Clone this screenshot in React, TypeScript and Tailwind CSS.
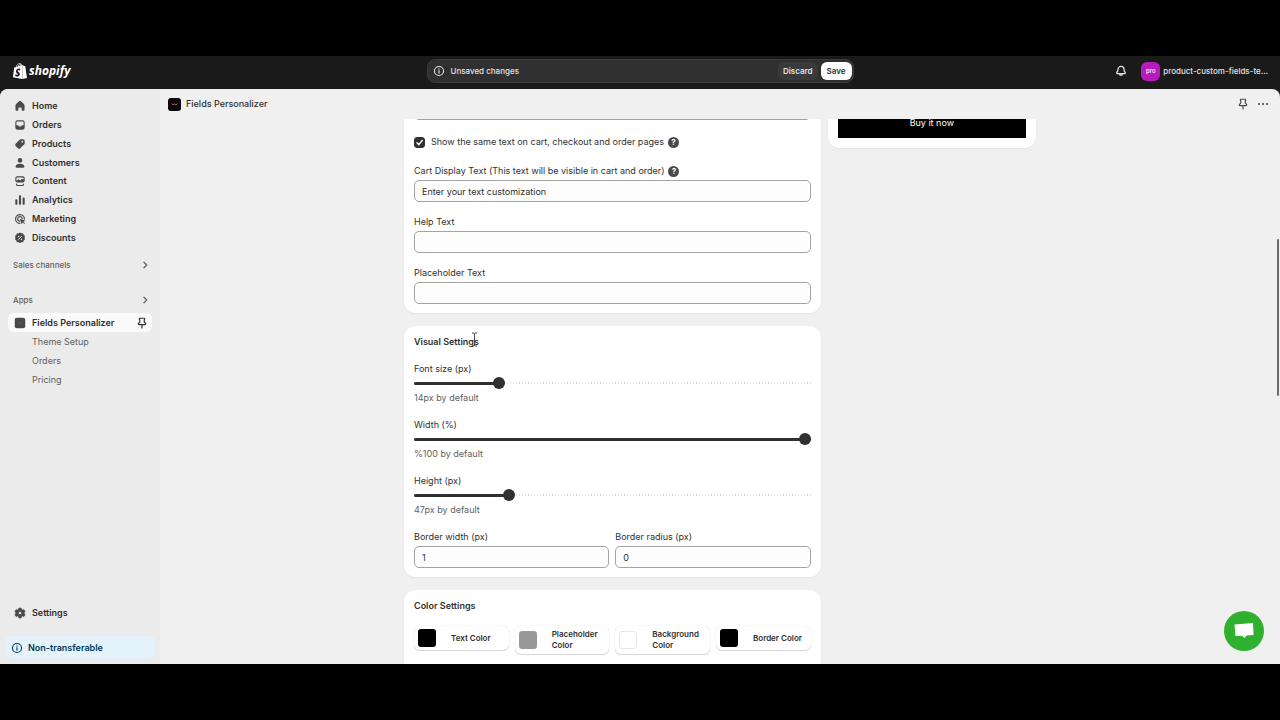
import { useState } from "react";
import type { ReactNode } from "react";
import { SiShopify } from "react-icons/si";

const Icon = ({ children, className = "size-[14px]" }: { children: ReactNode; className?: string }) => (
  <svg viewBox="0 0 20 20" fill="currentColor" className={`shrink-0 ${className}`} aria-hidden="true">
    {children}
  </svg>
);

const PinIcon = ({ className }: { className?: string }) => (
  <Icon className={className}>
    <path
      d="M6.800 3.200h6.400c.5 0 .8.500.6 1l-.6 1.600v2.700l1.900 2.400c.4.600 0 1.400-.7 1.400H5.600c-.7 0-1.100-.8-.7-1.400l1.900-2.400V5.800l-.6-1.600c-.2-.5.100-1 .6-1zM10 12.300v4.700"
      fill="none"
      stroke="currentColor"
      strokeWidth="1.700"
      strokeLinecap="round"
      strokeLinejoin="round"
    />
  </Icon>
);

const InfoIcon = ({ className }: { className?: string }) => (
  <Icon className={className}>
    <circle cx="10" cy="10" r="6.500" fill="none" stroke="currentColor" strokeWidth="1.600" />
    <path d="M10 9.500v3.800" stroke="currentColor" strokeWidth="1.600" strokeLinecap="round" />
    <circle cx="10" cy="7" r="1" />
  </Icon>
);

const ChevronIcon = () => (
  <Icon className="size-[14px]">
    <path d="M8.500 6l4 4-4 4" fill="none" stroke="currentColor" strokeWidth="1.800" strokeLinecap="round" strokeLinejoin="round" />
  </Icon>
);

const navItems = [
  {
    label: "Home",
    icon: <path d="M8.3 3.4a2.5 2.5 0 0 1 3.4 0l3.9 3.9c.6.6.9 1.3.9 2.1v5.6a1.7 1.7 0 0 1-1.7 1.7h-1.6a.9.9 0 0 1-.9-.9V13a1 1 0 0 0-1-1H8.700a1 1 0 0 0-1 1v2.800a.9.9 0 0 1-.9.9H5.200A1.700 1.700 0 0 1 3.500 15V9.400c0-.8.300-1.500.9-2.100z" />,
  },
  {
    label: "Orders",
    icon: (
      <path
        fillRule="evenodd"
        d="M6.500 3.300A3.200 3.200 0 0 0 3.300 6.500v7a3.200 3.200 0 0 0 3.200 3.200h7a3.200 3.200 0 0 0 3.200-3.200v-7a3.200 3.200 0 0 0-3.200-3.200zM4.900 6.500c0-.9.700-1.600 1.600-1.600h7c.9 0 1.600.7 1.600 1.600v4h-1.700c-.7 0-1.300.4-1.600 1l-.2.4c-.1.200-.3.300-.5.300H8.900c-.2 0-.4-.1-.5-.3l-.2-.4c-.3-.6-.9-1-1.600-1H4.900z"
      />
    ),
  },
  {
    label: "Products",
    icon: (
      <path
        fillRule="evenodd"
        d="M11.200 3.300c-.8 0-1.500.3-2 .9L3.800 9.700a2.300 2.300 0 0 0 0 3.300l3.200 3.200a2.300 2.300 0 0 0 3.300 0l5.500-5.400c.6-.5.900-1.200.9-2V5.600a2.300 2.300 0 0 0-2.300-2.300zM13.300 8a1.300 1.300 0 1 0 0-2.600 1.300 1.300 0 0 0 0 2.600z"
      />
    ),
  },
  {
    label: "Customers",
    icon: (
      <>
        <circle cx="10" cy="6.300" r="3.300" />
        <path d="M3.800 14.200c.9-2 3.300-3.200 6.200-3.200s5.300 1.200 6.200 3.200c.6 1.300-.4 2.500-1.700 2.500h-9c-1.300 0-2.300-1.200-1.700-2.500z" />
      </>
    ),
  },
  {
    label: "Content",
    icon: (
      <>
        <path
          fillRule="evenodd"
          d="M5.800 3.300a2.500 2.500 0 0 0-2.500 2.500v3.900a2.500 2.500 0 0 0 2.500 2.500h8.400a2.500 2.500 0 0 0 2.500-2.500V5.800a2.500 2.500 0 0 0-2.500-2.500zM4.900 5.800c0-.5.400-.9.900-.9h8.400c.5 0 .9.400.9.900v2.400l-1.400-1.100a1 1 0 0 0-1.300.1L10.200 9.300 8.400 7.900a1 1 0 0 0-1.200 0L4.900 9.600z"
        />
        <path d="M5 14.200v.8c0 .9.700 1.400 1.500 1.400h7c.8 0 1.500-.5 1.500-1.400v-.8" fill="none" stroke="currentColor" strokeWidth="1.500" strokeLinecap="round" />
      </>
    ),
  },
  {
    label: "Analytics",
    icon: (
      <>
        <rect x="3.300" y="9" width="3" height="7.700" rx="1" />
        <rect x="8.500" y="3.300" width="3" height="13.400" rx="1" />
        <rect x="13.700" y="6.300" width="3" height="10.400" rx="1" />
      </>
    ),
  },
  {
    label: "Marketing",
    icon: (
      <>
        <path
          d="M16.300 10.200A6.300 6.300 0 1 0 9.600 16.300M13.200 9.300A3.300 3.300 0 1 0 9.300 13.100"
          fill="none"
          stroke="currentColor"
          strokeWidth="1.700"
          strokeLinecap="round"
        />
        <path d="M10 10.800c-.2-.6.300-1.100.9-.9l5.400 1.800c.7.200.7 1.200.1 1.400l-1.600.7 2 2c.6.600-.4 1.600-1 1l-2-2-.7 1.600c-.3.600-1.200.6-1.400-.1z" />
      </>
    ),
  },
  {
    label: "Discounts",
    icon: (
      <>
        <path d="M8.600 2.800a2 2 0 0 1 2.800 0l.6.600.8-.1a2 2 0 0 1 2.300 1.700l.1.800.7.400a2 2 0 0 1 .9 2.700l-.4.700.4.800a2 2 0 0 1-.9 2.700l-.7.400-.1.800a2 2 0 0 1-2.300 1.700l-.8-.1-.6.600a2 2 0 0 1-2.800 0l-.6-.6-.8.100a2 2 0 0 1-2.300-1.700l-.1-.8-.7-.4a2 2 0 0 1-.9-2.700l.4-.8-.4-.7a2 2 0 0 1 .9-2.700l.7-.4.100-.8a2 2 0 0 1 2.300-1.700l.8.100z" />
        <path d="M7.800 12l4.400-4.400" stroke="#ebebeb" strokeWidth="1.300" strokeLinecap="round" />
        <circle cx="8" cy="7.800" r="1" fill="#ebebeb" />
        <circle cx="12" cy="11.800" r="1" fill="#ebebeb" />
      </>
    ),
  },
];

const TopBar = () => (
  <header className="grid h-[33px] shrink-0 grid-cols-[1fr_minmax(0,427px)_1fr] items-center bg-[#1a1a1a] pb-[3px] text-[8px] text-[#e3e3e3]">
    <a href="#home" className="flex items-center gap-px pl-3 text-white">
      <SiShopify className="size-4" aria-hidden="true" />
      <span className="font-['Open_Sans',sans-serif] text-[12px] leading-4 font-bold italic">shopify</span>
    </a>
    <div className="flex h-6 items-center rounded-lg border border-[#3a3a3a] bg-[#303030] pr-px pl-1">
      <InfoIcon className="size-[14px]" />
      <span className="ml-[5px] flex-1 font-medium">Unsaved changes</span>
      <button className="h-[18px] rounded-md bg-[#3a3a3a] px-[5px] font-semibold">Discard</button>
      <button className="ml-[3px] h-[18px] rounded-md bg-white px-[6px] font-semibold text-[#303030]">Save</button>
    </div>
    <div className="flex items-center justify-end pr-3">
      <button aria-label="Notifications" className="mr-[13px]">
        <Icon className="size-[14px]">
          <path
            d="M10 3.500a4.300 4.300 0 0 0-4.300 4.300c0 2.300-.7 3.100-1.500 4-.7.800-.2 2 .9 2h9.800c1.100 0 1.600-1.200.9-2-.8-.9-1.500-1.700-1.500-4A4.300 4.300 0 0 0 10 3.500zM8 14.200a2 2 0 0 0 4 0"
            fill="none"
            stroke="currentColor"
            strokeWidth="1.800"
          />
        </Icon>
      </button>
      <button className="flex items-center gap-[3px] font-medium">
        <span className="flex size-[19px] items-center justify-center rounded-md bg-[#b71bbd] text-[6px] text-white">pro</span>
        product-custom-fields-te...
      </button>
    </div>
  </header>
);

const Sidebar = () => (
  <aside className="flex w-40 shrink-0 flex-col bg-[#ebebeb] pt-2 text-[#303030]">
    <nav className="px-2 font-semibold">
      <ul className="flex h-[150px] flex-col">
        {navItems.map((item) => (
          <li key={item.label} className="flex flex-1">
            <a href="#nav" className="flex flex-1 items-center gap-[5px] px-[5px]">
              <Icon className="size-[14px] text-[#4a4a4a]">{item.icon}</Icon>
              {item.label}
            </a>
          </li>
        ))}
      </ul>
      <button className="mt-2 flex h-[19px] w-full items-center justify-between pl-[5px] text-[8px] font-medium text-[#616161]">
        Sales channels
        <ChevronIcon />
      </button>
      <button className="mt-4 flex h-[19px] w-full items-center justify-between pl-[5px] text-[8px] font-medium text-[#616161]">
        Apps
        <ChevronIcon />
      </button>
      <a href="#app" className="mt-1 flex h-[19px] items-center gap-[5px] rounded-md bg-[#fafafa] pr-[3px] pl-[5px]">
        <Icon className="size-[14px] text-[#4a4a4a]">
          <rect x="2.500" y="2.500" width="15" height="15" rx="3" />
          <path d="M6.500 9l2 1.500L10 9.300l1.500 1.200 2-1.500" fill="none" stroke="#6a5a5a" />
        </Icon>
        <span className="flex-1">Fields Personalizer</span>
        <PinIcon className="size-[14px]" />
      </a>
      <ul className="font-normal text-[#616161]">
        {["Theme Setup", "Orders", "Pricing"].map((label) => (
          <li key={label}>
            <a href="#sub" className="flex h-[19px] items-center pl-6">{label}</a>
          </li>
        ))}
      </ul>
    </nav>
    <div className="mt-auto px-[5px] pb-[5px]">
      <a href="#settings" className="flex h-[19px] items-center gap-[5px] px-2 font-semibold">
        <Icon className="size-[14px] text-[#4a4a4a]">
          <path
            fillRule="evenodd"
            strokeLinejoin="round"
            stroke="currentColor"
            d="M8.300 3h3.400l.5 2 1.400.8 2-.6 1.700 2.900-1.500 1.400v1.100l1.500 1.400-1.700 2.900-2-.6-1.400.8-.5 2H8.300l-.5-2-1.400-.8-2 .6L2.700 12l1.500-1.400V9.500L2.700 8.100l1.700-2.900 2 .6L7.800 5zM10 12.300a2.300 2.300 0 1 0 0-4.600 2.300 2.300 0 0 0 0 4.600z"
          />
        </Icon>
        Settings
      </a>
      <button className="mt-[14px] flex h-[23px] w-full items-center gap-1 rounded-md bg-[#e4f2fc] pl-[5px] font-semibold text-[#003a5a]">
        <InfoIcon className="size-[14px]" />
        Non-transferable
      </button>
    </div>
  </aside>
);

const HelpBadge = () => (
  <button
    aria-label="Help"
    className="flex size-[11px] shrink-0 items-center justify-center rounded-full bg-[#4a4a4a] text-[8px] font-bold text-white"
  >
    ?
  </button>
);

interface TextFieldProps {
  id: string;
  label: string;
  value?: string;
  help?: boolean;
}

const TextField = ({ id, label, value = "", help }: TextFieldProps) => (
  <div>
    <div className="mb-[2px] flex h-[14px] items-center gap-1">
      <label htmlFor={id}>{label}</label>
      {help && <HelpBadge />}
    </div>
    <input
      id={id}
      type="text"
      defaultValue={value}
      className="block h-[22px] w-full rounded-[5px] border border-[#a3a3a3] bg-[#fdfdfd] px-[7px] outline-none"
    />
  </div>
);

interface RangeFieldProps {
  id: string;
  label: string;
  max: number;
  initial: number;
  helpText: string;
}

const RangeField = ({ id, label, max, initial, helpText }: RangeFieldProps) => {
  const [value, setValue] = useState(initial);

  return (
    <div>
      <label htmlFor={id} className="block">{label}</label>
      <div className="grid h-[14px] items-center *:col-start-1 *:row-start-1">
        <div className="h-[2px] bg-[repeating-linear-gradient(to_right,#dcdcdc_0_1px,transparent_1px_3px)]" />
        <div className="h-[3px] rounded-full bg-[#303030]" style={{ width: `${(value / max) * 100}%` }} />
        <input
          id={id}
          type="range"
          min={0}
          max={max}
          value={value}
          onChange={(e) => setValue(Number(e.target.value))}
          className="h-3 w-full appearance-none bg-transparent [&::-webkit-slider-thumb]:size-3 [&::-webkit-slider-thumb]:appearance-none [&::-webkit-slider-thumb]:rounded-full [&::-webkit-slider-thumb]:bg-[#303030]"
        />
      </div>
      <p className="leading-4 text-[#616161]">{helpText}</p>
    </div>
  );
};

const colors = [
  { label: "Text Color", swatch: "bg-black" },
  { label: "Placeholder Color", swatch: "bg-[#999999]" },
  { label: "Background Color", swatch: "bg-white border border-[#e6e6e6]" },
  { label: "Border Color", swatch: "bg-black" },
];

const FieldForm = () => (
  <div className="flex flex-col gap-[13px]">
    <section className="flex flex-col rounded-xl bg-white px-[10px] pt-px pb-[9px] shadow-xs">
      <input
        type="text"
        aria-label="Text"
        className="h-[22px] w-full rounded-[5px] border border-[#a3a3a3] bg-[#fdfdfd] px-[7px]"
      />
      <div className="my-[15px] flex h-[14px] items-center gap-1">
        <label className="flex items-center gap-[6px]">
          <span className="grid *:col-start-1 *:row-start-1">
            <input type="checkbox" defaultChecked className="peer size-[11px] appearance-none rounded-[3px] border border-[#303030] checked:bg-[#303030]" />
            <svg viewBox="0 0 11 11" className="pointer-events-none hidden size-[11px] peer-checked:block" aria-hidden="true">
              <path d="M3 5.800l1.800 1.800L8.200 3.500" fill="none" stroke="#fff" strokeWidth="1.400" strokeLinecap="round" />
            </svg>
          </span>
          Show the same text on cart, checkout and order pages
        </label>
        <HelpBadge />
      </div>
      <div className="flex flex-col gap-[13px]">
        <TextField
          id="cart-text"
          label="Cart Display Text (This text will be visible in cart and order)"
          value="Enter your text customization"
          help
        />
        <TextField id="help-text" label="Help Text" />
        <TextField id="placeholder-text" label="Placeholder Text" />
      </div>
    </section>

    <section className="flex flex-col rounded-xl bg-white px-[10px] py-[9px] shadow-xs">
      <h2 className="mb-[13px] font-semibold">Visual Settings</h2>
      <div className="flex flex-col gap-3">
        <RangeField id="font-size" label="Font size (px)" max={68} initial={14} helpText="14px by default" />
        <RangeField id="width" label="Width (%)" max={100} initial={100} helpText="%100 by default" />
        <RangeField id="height" label="Height (px)" max={203} initial={47} helpText="47px by default" />
        <div className="grid grid-cols-2 gap-[6px]">
          <TextField id="border-width" label="Border width (px)" value="1" />
          <TextField id="border-radius" label="Border radius (px)" value="0" />
        </div>
      </div>
    </section>

    <section className="flex flex-col rounded-xl bg-white px-[10px] pt-[9px] pb-5 shadow-xs">
      <h2 className="mb-[13px] font-semibold">Color Settings</h2>
      <div className="grid grid-cols-4 items-start gap-[6px]">
        {colors.map((color) => (
          <button
            key={color.label}
            className="flex items-center gap-[15px] rounded-md px-1 py-[3px] text-left text-[8px] leading-[11px] font-semibold shadow-[0_0_1px_rgba(0,0,0,0.2),0_1px_1px_rgba(0,0,0,0.15)]"
          >
            <span className={`size-[18px] shrink-0 rounded-[3px] ${color.swatch}`} />
            {color.label}
          </button>
        ))}
      </div>
    </section>
  </div>
);

const App = () => (
  <div className="min-h-screen bg-black py-14 font-[Inter,sans-serif] text-[9px] leading-[14px] text-[#303030]">
    <div className="flex h-[calc(100vh-112px)] flex-col overflow-hidden bg-[#1a1a1a]">
      <TopBar />
      <div className="flex min-h-0 flex-1 overflow-hidden rounded-t-lg bg-[#f0f0f0]">
        <Sidebar />
        <main className="flex min-w-0 flex-1 flex-col">
          <div className="flex h-[30px] shrink-0 items-center px-2">
            <svg viewBox="0 0 13 13" className="size-[13px]" aria-hidden="true">
              <rect width="13" height="13" rx="3" fill="#0a0506" />
              <path d="M3.500 5.500l1.500 1.300L6.500 6 8 7l1.500-1.500" fill="none" stroke="#b0606a" />
            </svg>
            <h1 className="ml-[5px] flex-1 font-medium">Fields Personalizer</h1>
            <button aria-label="Pin app" className="mr-1 text-[#4a4a4a]">
              <PinIcon className="size-[14px]" />
            </button>
            <button aria-label="More actions" className="text-[#4a4a4a]">
              <Icon className="size-[18px]">
                <circle cx="5.500" cy="10" r="1.200" />
                <circle cx="10" cy="10" r="1.200" />
                <circle cx="14.500" cy="10" r="1.200" />
              </Icon>
            </button>
          </div>
          <div className="min-h-0 flex-1 overflow-hidden">
            <div className="mx-auto -mt-[22px] grid max-w-[632px] grid-cols-[2fr_1fr] items-start gap-[7px]">
              <FieldForm />
              <section className="rounded-xl bg-white px-[10px] pt-[11px] pb-[10px] shadow-xs">
                <button className="h-[30px] w-full bg-black leading-[8px] text-white">Buy it now</button>
              </section>
            </div>
          </div>
        </main>
      </div>
    </div>

    {/* Page scrollbar */}
    <div className="absolute top-[239px] right-px h-[157px] w-[2px] rounded-full bg-[#6b6b6b]" />

    {/* Text cursor */}
    <svg viewBox="0 0 7 15" className="absolute top-[332px] left-[471px] h-[15px] w-[7px]" aria-hidden="true">
      <path d="M1 1h2l.5.500L4 1h2M3.500 1.500v12M1 14h2l.5-.500.500.500h2" fill="none" stroke="#444" />
    </svg>

    <button
      aria-label="Open chat"
      className="absolute right-4 bottom-[69px] flex size-10 items-center justify-center rounded-full bg-[#2fb12f]"
    >
      <svg viewBox="0 0 20 18" className="h-[18px] w-5" aria-hidden="true">
        <path d="M.5 2.500L19 1l.5 12-7 .500L10.500 16 8 13.800 1.500 14z" fill="#fff" />
      </svg>
    </button>
  </div>
);

export default App;
